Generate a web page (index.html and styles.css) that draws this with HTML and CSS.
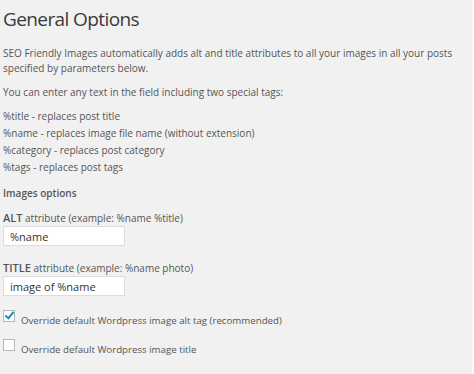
FILE: index.html
```html
<!DOCTYPE html>
<html lang="en">
<head>
<meta charset="UTF-8">
<title>General Options</title>
<link rel="stylesheet" href="styles.css">
</head>
<body>
<div class="wrap">
    <h2>General Options</h2>

    <p class="intro">SEO Friendly Images automatically adds alt and title attributes to all your images in all your posts specified by parameters below.</p>
    <p class="note">You can enter any text in the field including two special tags:</p>

    <ul class="tags">
        <li>%title - replaces post title</li>
        <li>%name - replaces image file name (without extension)</li>
        <li>%category - replaces post category</li>
        <li>%tags - replaces post tags</li>
    </ul>

    <h4>Images options</h4>

    <!-- Alt / title fields -->
    <div class="field">
        <label for="altText"><b>ALT</b> attribute (example: %name %title)</label>
        <input type="text" id="altText" value="%name">
    </div>
    <div class="field second">
        <label for="titleText"><b>TITLE</b> attribute (example: %name photo)</label>
        <input type="text" id="titleText" value="image of %name">
    </div>

    <!-- Override options -->
    <label class="check first">
        <span class="box checked"></span>
        <span class="check-text">Override default Wordpress image alt tag (recommended)</span>
    </label>
    <label class="check">
        <span class="box"></span>
        <span class="check-text">Override default Wordpress image title</span>
    </label>
</div>
</body>
</html>
```

FILE: styles.css
```css
body {
    margin: 0;
    background-color: #f1f1f1;
    font-family: 'Open Sans', sans-serif;
    color: #555555;
    font-size: 10px;
}

.wrap {
    padding: 6px 3px 0 3px;
    border-right: 2px solid #fafafa;
    height: 368px;
}

h2 {
    margin: 0;
    font-size: 19px;
    font-weight: 400;
    letter-spacing: -0.6px;
    color: #3a3a3a;
    line-height: 26px;
}

p {
    margin: 0;
    line-height: 15px;
}

.intro {
    margin-top: 14px;
}

.note {
    margin-top: 9px;
}

.tags {
    list-style: none;
    margin: 8px 0 0 0;
    padding: 0;
}

.tags li {
    line-height: 17px;
}

h4 {
    margin: 9px 0 0 0;
    font-size: 10px;
    font-weight: 600;
    line-height: 17px;
}

.field {
    margin-top: 8px;
}

.field.second {
    margin-top: 14px;
}

.field label {
    display: block;
    line-height: 15px;
}

.field label b {
    font-weight: 600;
    font-size: 11px;
}

.field input {
    display: block;
    margin-top: 0;
    width: 108px;
    height: 18px;
    padding: 0 6px;
    border: 1px solid #dddddd;
    background: #ffffff;
    font-family: 'Open Sans', sans-serif;
    font-size: 11px;
    color: #333333;
    box-sizing: content-box;
    outline: none;
}

.check {
    display: flex;
    align-items: flex-start;
    gap: 6px;
    margin-top: 11px;
}

.check.first {
    margin-top: 14px;
}

.check-text {
    padding-top: 3px;
    line-height: 15px;
    font-size: 9.7px;
}

.box {
    flex: none;
    width: 10px;
    height: 10px;
    border: 1px solid #b4b9be;
    background: #ffffff;
    position: relative;
}

.box.checked::after {
    content: '';
    position: absolute;
    left: 3px;
    top: -1px;
    width: 3px;
    height: 7px;
    border: solid #1e8cbe;
    border-width: 0 2px 2px 0;
    transform: rotate(40deg);
}
```
